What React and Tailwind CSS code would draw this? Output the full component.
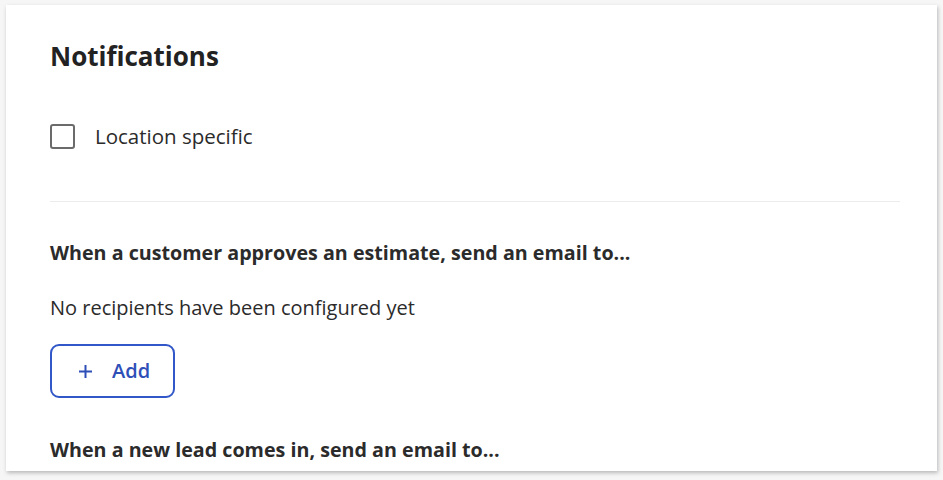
import React from 'react';

function Checkbox({ label }) {
  return (
    <label className="flex items-center gap-[20px] cursor-pointer">
      <span className="w-[25px] h-[25px] rounded-[3px] border-2 border-[#6b6b6b] bg-white" />
      <span className="text-[20.5px] leading-[26px] text-[#2b2b2b]">{label}</span>
    </label>
  );
}

function AddButton() {
  return (
    <button className="flex items-center h-[54px] w-[125px] pl-[26px] rounded-[9px] border-2 border-[#3157c8] text-[#2f4fb8] bg-white">
      <svg width="15" height="15" viewBox="0 0 15 15" className="mr-[19px]">
        <path d="M7.5 1v13M1 7.5h13" stroke="currentColor" strokeWidth="2" />
      </svg>
      <span className="text-[20px] leading-[26px] font-semibold">Add</span>
    </button>
  );
}

export default function App() {
  return (
    <div className="w-[943px] h-[480px] bg-[#f6f6f6] p-[5px] pl-[6px]" style={{ fontFamily: '"Open Sans", "Noto Sans", sans-serif' }}>
      <div className="w-[931px] h-[466px] bg-white overflow-hidden shadow-[1px_2px_4px_rgba(0,0,0,0.25)] pl-[44px] pr-[37px] pt-[33px]">
        <h1 className="text-[26px] font-bold text-[#222] leading-[36px]">Notifications</h1>
        <div className="mt-[49px]">
          <Checkbox label="Location specific" />
        </div>
        <div className="mt-[52px] h-px bg-[#ececec]" />
        <h2 className="mt-[38px] text-[19.7px] font-bold text-[#2b2b2b] leading-[26px]">
          When a customer approves an estimate, send an email to...
        </h2>
        <p className="mt-[29px] text-[20px] text-[#2b2b2b] leading-[26px]">No recipients have been configured yet</p>
        <div className="mt-[23px]">
          <AddButton />
        </div>
        <h2 className="mt-[39px] text-[19.7px] font-bold text-[#2b2b2b] leading-[26px]">
          When a new lead comes in, send an email to...
        </h2>
      </div>
    </div>
  );
}
